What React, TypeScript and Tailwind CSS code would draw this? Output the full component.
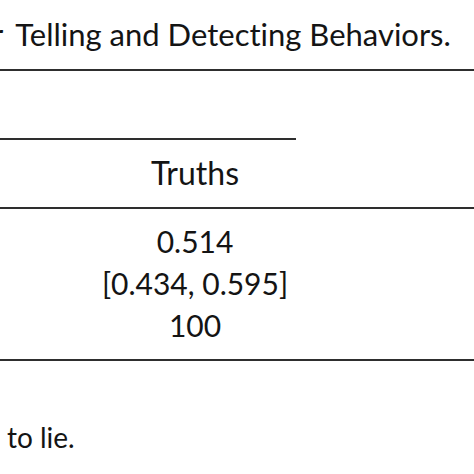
export default function App() {
  const font = { fontFamily: "Lato, 'Open Sans', sans-serif" };
  return (
    <div
      className="w-[474px] h-[474px] overflow-hidden bg-white text-[#141414] [font-variant-ligatures:none]"
      style={font}
    >
      <div className="h-[69px] pt-[18px] whitespace-nowrap text-[31px] leading-[32px] ml-[-8px]">
        <span>r</span>
        <span className="ml-[12px]">Telling and Detecting Behaviors.</span>
      </div>
      <div className="h-[2px] w-full bg-[#2e2e2e]" />
      <div className="h-[67px]" />
      <div className="h-[2px] w-[296px] bg-[#2e2e2e]" />
      <div className="grid grid-cols-[94px_202px_1fr] h-[67px] pt-[17px] text-[32px] leading-[32px]">
        <div />
        <div className="text-center">Truths</div>
        <div />
      </div>
      <div className="h-[2px] w-full bg-[#2e2e2e]" />
      <div className="grid grid-cols-[94px_202px_1fr] h-[150px] pt-[11px] text-[30px] leading-[42px]">
        <div />
        <div className="flex flex-col items-center whitespace-nowrap">
          <div>0.514</div>
          <div>[0.434, 0.595]</div>
          <div>100</div>
        </div>
        <div />
      </div>
      <div className="h-[2px] w-full bg-[#2e2e2e]" />
      <div className="pt-[62px] pl-[7px] text-[28px] leading-[28px]">to lie.</div>
    </div>
  );
}
